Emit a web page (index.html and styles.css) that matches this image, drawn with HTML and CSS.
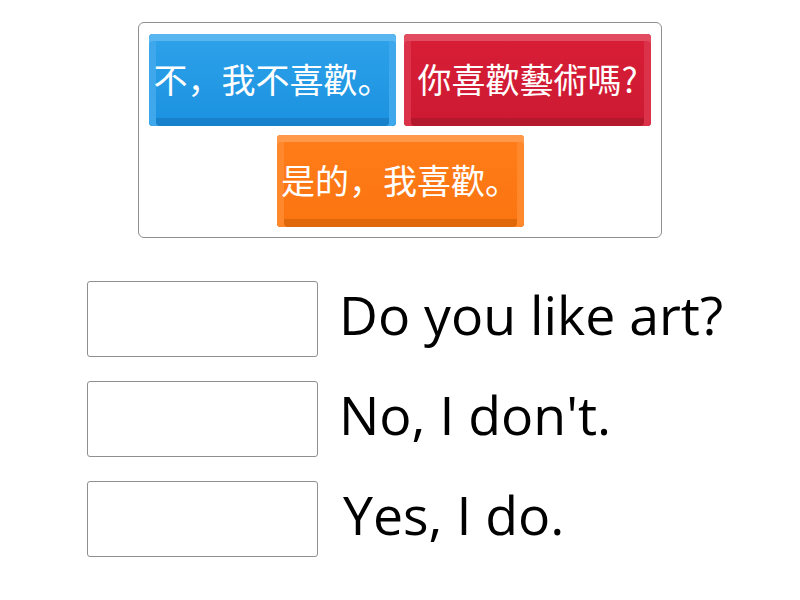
FILE: index.html
```html
<!DOCTYPE html>
<html lang="en">
<head>
<meta charset="utf-8">
<title>Match up</title>
<link rel="stylesheet" href="styles.css">
</head>
<body>
<main class="page">
  <section class="bank">
    <div class="tile tile-blue">不，我不喜歡。</div>
    <div class="tile tile-red">你喜歡藝術嗎?</div>
    <div class="tile tile-orange">是的，我喜歡。</div>
  </section>
  <section class="rows">
    <div class="row"><div class="slot"></div><span class="prompt">Do you like art?</span></div>
    <div class="row"><div class="slot"></div><span class="prompt">No, I don't.</span></div>
    <div class="row"><div class="slot"></div><span class="prompt prompt-yes">Yes, I do.</span></div>
  </section>
</main>
</body>
</html>
```

FILE: styles.css
```css
html, body {
  margin: 0;
  padding: 0;
  background: #ffffff;
}

.page {
  width: 800px;
  height: 600px;
  display: flex;
  flex-direction: column;
  align-items: center;
  font-family: "Open Sans", "Noto Sans CJK JP", sans-serif;
}

.bank {
  box-sizing: border-box;
  margin-top: 22px;
  width: 524px;
  height: 216px;
  border: 1px solid #8f8f8f;
  border-radius: 6px;
  padding: 11px 10px 10px 10px;
  display: flex;
  flex-wrap: wrap;
  justify-content: center;
  align-content: flex-start;
  column-gap: 8px;
  row-gap: 9px;
}

.tile {
  box-sizing: border-box;
  width: 247px;
  height: 92px;
  border-radius: 4px;
  display: flex;
  align-items: center;
  justify-content: center;
  white-space: nowrap;
  color: #ffffff;
  font-family: "Noto Sans CJK JP", "Noto Sans CJK TC", sans-serif;
  font-size: 34px;
  line-height: 1;
  padding-bottom: 2px;
}

.tile-blue {
  background: linear-gradient(#2ea2ea, #1b92e0);
  box-shadow: inset 0 7px 0 #5ab6f0, inset 7px 0 0 #3fa8ec, inset -7px 0 0 #3fa8ec, inset 0 -8px 0 #1781cc;
}

.tile-red {
  background: linear-gradient(#d91d37, #cc1a32);
  box-shadow: inset 0 7px 0 #e24c60, inset 7px 0 0 #db3249, inset -7px 0 0 #db3249, inset 0 -8px 0 #b4182d;
}

.tile-orange {
  background: linear-gradient(#ff7d1a, #fb7410);
  box-shadow: inset 0 7px 0 #ff9848, inset 7px 0 0 #ff872c, inset -7px 0 0 #ff872c, inset 0 -8px 0 #e0670a;
}

.rows {
  margin-top: 43px;
  width: 800px;
  display: flex;
  flex-direction: column;
  row-gap: 24px;
}

.row {
  display: flex;
  align-items: center;
  padding-left: 87px;
  column-gap: 21px;
}

.slot {
  box-sizing: border-box;
  width: 231px;
  height: 76px;
  border: 1px solid #8f8f8f;
  border-radius: 3px;
  background: #ffffff;
  flex: none;
}

.prompt {
  font-size: 53.6px;
  color: #000000;
  line-height: 1;
  padding-bottom: 8px;
}

.prompt-yes {
  padding-left: 4px;
}
```
